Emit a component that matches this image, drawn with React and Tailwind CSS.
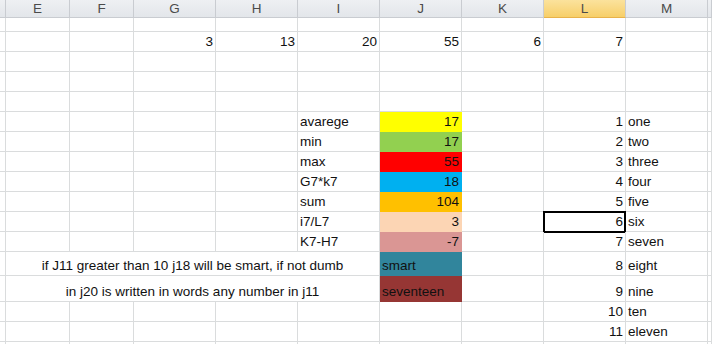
import React from 'react';

const COLS = ['D', 'E', 'F', 'G', 'H', 'I', 'J', 'K', 'L', 'M', 'N'];
const WCLS = {
  D: 'w-[6px]',
  E: 'w-[64px]',
  F: 'w-[64px]',
  G: 'w-[82px]',
  H: 'w-[82px]',
  I: 'w-[82px]',
  J: 'w-[82px]',
  K: 'w-[82px]',
  L: 'w-[82px]',
  M: 'w-[82px]',
  N: 'flex-1',
};

const FILLS = {
  yellow: 'bg-[#ffff00] border-[#ffff00]',
  green: 'bg-[#92d050] border-[#92d050]',
  red: 'bg-[#ff0000] border-[#ff0000]',
  blue: 'bg-[#00b0f0] border-[#00b0f0]',
  orange: 'bg-[#ffc000] border-[#ffc000]',
  peach: 'bg-[#fcd5b4] border-[#fcd5b4]',
  pink: 'bg-[#da9694] border-[#da9694]',
  teal: 'bg-[#31859c] border-[#31859c]',
  maroon: 'bg-[#963634] border-[#963634]',
};

const ROWS = [
  { h: 'h-[14px]' },
  {
    h: 'h-[20px]',
    cells: {
      G: { t: '3', r: true },
      H: { t: '13', r: true },
      I: { t: '20', r: true },
      J: { t: '55', r: true },
      K: { t: '6', r: true },
      L: { t: '7', r: true },
    },
  },
  { h: 'h-[20px]' },
  { h: 'h-[20px]' },
  { h: 'h-[20px]' },
  {
    h: 'h-[20px]',
    cells: {
      I: { t: 'avarege' },
      J: { t: '17', r: true, fill: 'yellow' },
      L: { t: '1', r: true },
      M: { t: 'one' },
    },
  },
  {
    h: 'h-[20px]',
    cells: {
      I: { t: 'min' },
      J: { t: '17', r: true, fill: 'green' },
      L: { t: '2', r: true },
      M: { t: 'two' },
    },
  },
  {
    h: 'h-[20px]',
    cells: {
      I: { t: 'max' },
      J: { t: '55', r: true, fill: 'red' },
      L: { t: '3', r: true },
      M: { t: 'three' },
    },
  },
  {
    h: 'h-[20px]',
    cells: {
      I: { t: 'G7*k7' },
      J: { t: '18', r: true, fill: 'blue' },
      L: { t: '4', r: true },
      M: { t: 'four' },
    },
  },
  {
    h: 'h-[20px]',
    cells: {
      I: { t: 'sum' },
      J: { t: '104', r: true, fill: 'orange' },
      L: { t: '5', r: true },
      M: { t: 'five' },
    },
  },
  {
    h: 'h-[20px]',
    cells: {
      I: { t: 'i7/L7' },
      J: { t: '3', r: true, fill: 'peach' },
      L: { t: '6', r: true, sel: true },
      M: { t: 'six' },
    },
  },
  {
    h: 'h-[20px]',
    cells: {
      I: { t: 'K7-H7' },
      J: { t: '-7', r: true, fill: 'pink' },
      L: { t: '7', r: true },
      M: { t: 'seven' },
    },
  },
  {
    h: 'h-[24px]',
    merge: 'if J11 greater than 10 j18 will be smart, if not dumb',
    cells: {
      J: { t: 'smart', fill: 'teal' },
      L: { t: '8', r: true },
      M: { t: 'eight' },
    },
  },
  {
    h: 'h-[26px]',
    merge: 'in j20 is written in words any number in j11',
    cells: {
      J: { t: 'seventeen', fill: 'maroon' },
      L: { t: '9', r: true },
      M: { t: 'nine' },
    },
  },
  {
    h: 'h-[20px]',
    cells: {
      L: { t: '10', r: true },
      M: { t: 'ten' },
    },
  },
  {
    h: 'h-[20px]',
    cells: {
      L: { t: '11', r: true },
      M: { t: 'eleven' },
    },
  },
  { h: 'h-[20px]' },
];

const base =
  'relative box-border h-full border-r border-b flex items-end pb-[1px] leading-[16px] whitespace-nowrap shrink-0';

function Row({ h, cells = {}, merge }) {
  const out = [];
  for (let i = 0; i < COLS.length; i++) {
    const c = COLS[i];
    if (merge && c === 'E') {
      out.push(
        <div key="merge" className={`${base} w-[374px] border-[#dadcdd] justify-center`}>
          {merge}
        </div>
      );
      i = 5;
      continue;
    }
    const cell = cells[c];
    const fill = cell && cell.fill ? FILLS[cell.fill] : 'border-[#dadcdd]';
    const align = cell && cell.r ? 'justify-end pr-[2px]' : 'justify-start pl-[2px]';
    out.push(
      <div key={c} className={`${base} ${WCLS[c]} ${fill} ${align} ${c === 'N' ? 'min-w-0' : ''}`}>
        {cell ? cell.t : null}
        {cell && cell.sel ? (
          <div className="absolute left-[-1px] top-[-1px] w-[83px] h-[22px] border-2 border-black pointer-events-none" />
        ) : null}
      </div>
    );
  }
  return <div className={`flex ${h}`}>{out}</div>;
}

function Header() {
  return (
    <div className="flex h-[18px]">
      {COLS.map((c) => {
        const sel = c === 'L';
        const bg = sel
          ? 'bg-gradient-to-b from-[#fbe29c] to-[#f7cf68] border-b-[#e8b24a]'
          : 'bg-gradient-to-b from-[#eef0f3] to-[#e3e6ea] border-b-[#c9ccd1]';
        return (
          <div
            key={c}
            className={`box-border h-full border-r border-b border-r-[#c9ccd1] ${bg} ${WCLS[c]} shrink-0 flex items-center justify-center leading-[16px] text-[#4b4b4b] ${c === 'N' ? 'min-w-0' : ''}`}
          >
            {c === 'D' || c === 'N' ? '' : c}
          </div>
        );
      })}
    </div>
  );
}

export default function App() {
  return (
    <div className="w-[712px] h-[344px] overflow-hidden bg-white font-['Liberation_Sans',Arial,sans-serif] text-[13.5px] text-[#111]">
      <Header />
      {ROWS.map((r, i) => (
        <Row key={i} {...r} />
      ))}
    </div>
  );
}
